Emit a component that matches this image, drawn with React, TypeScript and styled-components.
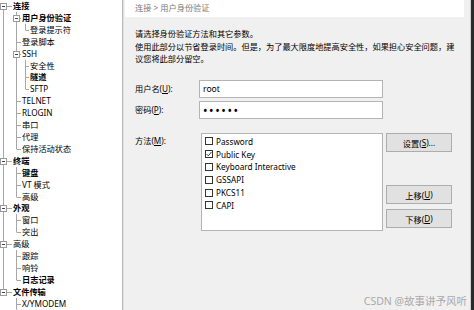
import React from "react";
import styled, { createGlobalStyle } from "styled-components";

const Global = createGlobalStyle`
  html, body { margin: 0; padding: 0; }
  body {
    width: 474px; height: 310px; overflow: hidden; background: #f0f0f0;
    font-family: "Noto Sans", "Noto Sans CJK SC", sans-serif;
  }
`;

const FONT = `"Noto Sans", "Noto Sans CJK SC", sans-serif`;
const FS = "8.2px";
const ROW_H = 11.92;

const Root = styled.div`
  position: relative;
  display: flex;
  width: 474px;
  height: 310px;
  overflow: hidden;
  font-family: ${FONT};
  font-size: ${FS};
  color: #000;
`;

const TreePane = styled.div`
  width: 122px;
  flex: none;
  background: #fff;
  border-right: 1px solid #b9b9b9;
  box-shadow: 1px 0 0 #e2e2e2;
  overflow: hidden;
`;

const TreeRow = styled.div`
  display: flex;
  align-items: center;
  height: ${ROW_H}px;
  white-space: nowrap;
`;

const TreeLabel = styled.span<{ $bold?: boolean }>`
  font-weight: ${(p) => (p.$bold ? 700 : 400)};
  line-height: ${ROW_H}px;
`;

const Panel = styled.div`
  flex: 1;
  display: flex;
  flex-direction: column;
  margin-left: 2px;
  border-right: 3px solid #2a2a2a;
  box-shadow: inset -1px 0 0 #cfcfcf;
  background: #f0f0f0;
`;

const Crumb = styled.div`
  height: 17px;
  margin-right: 7px;
  background: #fff;
  color: #7a7a7a;
  line-height: 16px;
  padding-left: 10px;
`;

const Body = styled.div`
  padding: 0 10px;
  display: flex;
  flex-direction: column;
`;

const Para = styled.p<{ $mt: number }>`
  margin: ${(p) => p.$mt}px 0 0;
  line-height: 12px;
  width: 324px;
`;

const FormGrid = styled.div`
  display: grid;
  grid-template-columns: 64px 184px;
  row-gap: 3px;
  margin-top: 15px;
  align-items: center;
`;

const Label = styled.span`
  line-height: 12px;
`;

const TextBox = styled.div<{ $pw?: boolean }>`
  height: 18px;
  box-sizing: border-box;
  background: #fff;
  border: 1px solid #b4b4b4;
  padding-left: 3px;
  display: flex;
  align-items: center;
  font-size: ${(p) => (p.$pw ? "12px" : "8.6px")};
  letter-spacing: ${(p) => (p.$pw ? "1.6px" : "0")};
`;

const MethodRow = styled.div`
  display: flex;
  margin-top: 14px;
`;

const MethodLabel = styled.span`
  width: 66px;
  padding-top: 2px;
  line-height: 12px;
`;

const ListBox = styled.div`
  width: 182px;
  height: 98px;
  box-sizing: border-box;
  background: #fff;
  border: 1px solid #b4b4b4;
  padding: 1px 0 0 3px;
`;

const Item = styled.div`
  display: flex;
  align-items: center;
  height: 12.8px;
  gap: 3px;
`;

const Check = styled.span`
  width: 8px;
  height: 8px;
  box-sizing: border-box;
  border: 1px solid #333;
  background: #fff;
  display: flex;
  align-items: center;
  justify-content: center;
`;

const Buttons = styled.div`
  display: flex;
  flex-direction: column;
  margin-left: 3px;
  width: 66px;
`;

const Btn = styled.div<{ $mt: number }>`
  height: 19px;
  box-sizing: border-box;
  margin-top: ${(p) => p.$mt}px;
  background: #e1e1e1;
  border: 1px solid #adadad;
  display: flex;
  align-items: center;
  justify-content: center;
`;

const Watermark = styled.div`
  position: absolute;
  right: 7px;
  bottom: 2px;
  font-size: 10.5px;
  color: #a9a9a9;
  line-height: 14px;
  white-space: nowrap;
`;

type Raw = [number, string, { bold?: boolean; box?: boolean; more?: boolean }?];

const raw: Raw[] = [
  [0, "连接", { bold: true, box: true }],
  [1, "用户身份验证", { bold: true, box: true }],
  [2, "登录提示符"],
  [1, "登录脚本"],
  [1, "SSH", { box: true }],
  [2, "安全性"],
  [2, "隧道", { bold: true }],
  [2, "SFTP"],
  [1, "TELNET"],
  [1, "RLOGIN"],
  [1, "串口"],
  [1, "代理"],
  [1, "保持活动状态"],
  [0, "终端", { bold: true, box: true }],
  [1, "键盘", { bold: true }],
  [1, "VT 模式"],
  [1, "高级"],
  [0, "外观", { bold: true, box: true }],
  [1, "窗口"],
  [1, "突出"],
  [0, "高级", { box: true }],
  [1, "跟踪"],
  [1, "响铃"],
  [1, "日志记录", { bold: true }],
  [0, "文件传输", { bold: true, box: true }],
  [1, "X/YMODEM", { more: true }],
];

const COL = [3.5, 16.5, 25.5];
const TEXT_X = [13, 22, 30];

type Row = {
  level: number;
  label: string;
  bold?: boolean;
  box?: boolean;
  last: boolean;
  guides: boolean[];
  first: boolean;
};

function buildRows(): Row[] {
  const lastFlags = raw.map((r, i) => {
    if (r[2]?.more) return false;
    for (let j = i + 1; j < raw.length; j++) {
      if (raw[j][0] < r[0]) return true;
      if (raw[j][0] === r[0]) return false;
    }
    return true;
  });
  const stack: boolean[] = [];
  return raw.map((r, i) => {
    const level = r[0];
    stack[level] = lastFlags[i];
    const guides = stack.slice(0, level).map((l) => !l);
    return {
      level,
      label: r[1],
      bold: r[2]?.bold,
      box: r[2]?.box,
      last: lastFlags[i],
      guides,
      first: i === 0,
    };
  });
}

const LINE = "#a6a6a6";

function Lines({ row }: { row: Row }) {
  const w = TEXT_X[row.level];
  const h = ROW_H;
  const mid = 6;
  const cx = COL[row.level];
  return (
    <svg width={w} height={h} style={{ flex: "none", display: "block" }}>
      {row.guides.map((g, k) =>
        g ? <line key={k} x1={COL[k]} y1={0} x2={COL[k]} y2={h} stroke={LINE} strokeWidth={1} /> : null
      )}
      <line x1={cx} y1={row.first ? mid : 0} x2={cx} y2={row.last ? mid : h} stroke={LINE} strokeWidth={1} />
      <line x1={cx} y1={mid + 0.5} x2={w - 1} y2={mid + 0.5} stroke={LINE} strokeWidth={1} />
      {row.box && (
        <g>
          <rect x={cx - 3} y={mid - 2.5} width={6} height={6} fill="#fff" stroke="#9a9a9a" strokeWidth={1} />
          <line x1={cx - 1.5} y1={mid + 0.5} x2={cx + 1.5} y2={mid + 0.5} stroke="#444" strokeWidth={1} />
        </g>
      )}
    </svg>
  );
}

const methods = [
  { name: "Password", on: false },
  { name: "Public Key", on: true },
  { name: "Keyboard Interactive", on: false },
  { name: "GSSAPI", on: false },
  { name: "PKCS11", on: false },
  { name: "CAPI", on: false },
];

export default function App() {
  const rows = buildRows();
  return (
    <>
      <Global />
      <Root>
        <TreePane>
          {rows.map((r, i) => (
            <TreeRow key={i}>
              <Lines row={r} />
              <TreeLabel $bold={r.bold}>{r.label}</TreeLabel>
            </TreeRow>
          ))}
        </TreePane>
        <Panel>
          <Crumb>连接 &gt; 用户身份验证</Crumb>
          <Body>
            <Para $mt={11}>请选择身份验证方法和其它参数。</Para>
            <Para $mt={1}>
              使用此部分以节省登录时间。但是，为了最大限度地提高安全性，如果担心安全问题，建议您将此部分留空。
            </Para>
            <FormGrid>
              <Label>用户名(<u>U</u>):</Label>
              <TextBox>root</TextBox>
              <Label>密码(<u>P</u>):</Label>
              <TextBox $pw>••••••</TextBox>
            </FormGrid>
            <MethodRow>
              <MethodLabel>方法(<u>M</u>):</MethodLabel>
              <ListBox>
                {methods.map((m) => (
                  <Item key={m.name}>
                    <Check>
                      {m.on && (
                        <svg width="6" height="6" viewBox="0 0 6 6">
                          <path d="M0.6 3.1 L2.3 4.8 L5.5 1" fill="none" stroke="#222" strokeWidth="0.9" />
                        </svg>
                      )}
                    </Check>
                    <span>{m.name}</span>
                  </Item>
                ))}
              </ListBox>
              <Buttons>
                <Btn $mt={0}>设置(<u>S</u>)...</Btn>
                <Btn $mt={33}>上移(<u>U</u>)</Btn>
                <Btn $mt={5}>下移(<u>D</u>)</Btn>
              </Buttons>
            </MethodRow>
          </Body>
        </Panel>
        <Watermark>CSDN @故事讲予风听</Watermark>
      </Root>
    </>
  );
}
